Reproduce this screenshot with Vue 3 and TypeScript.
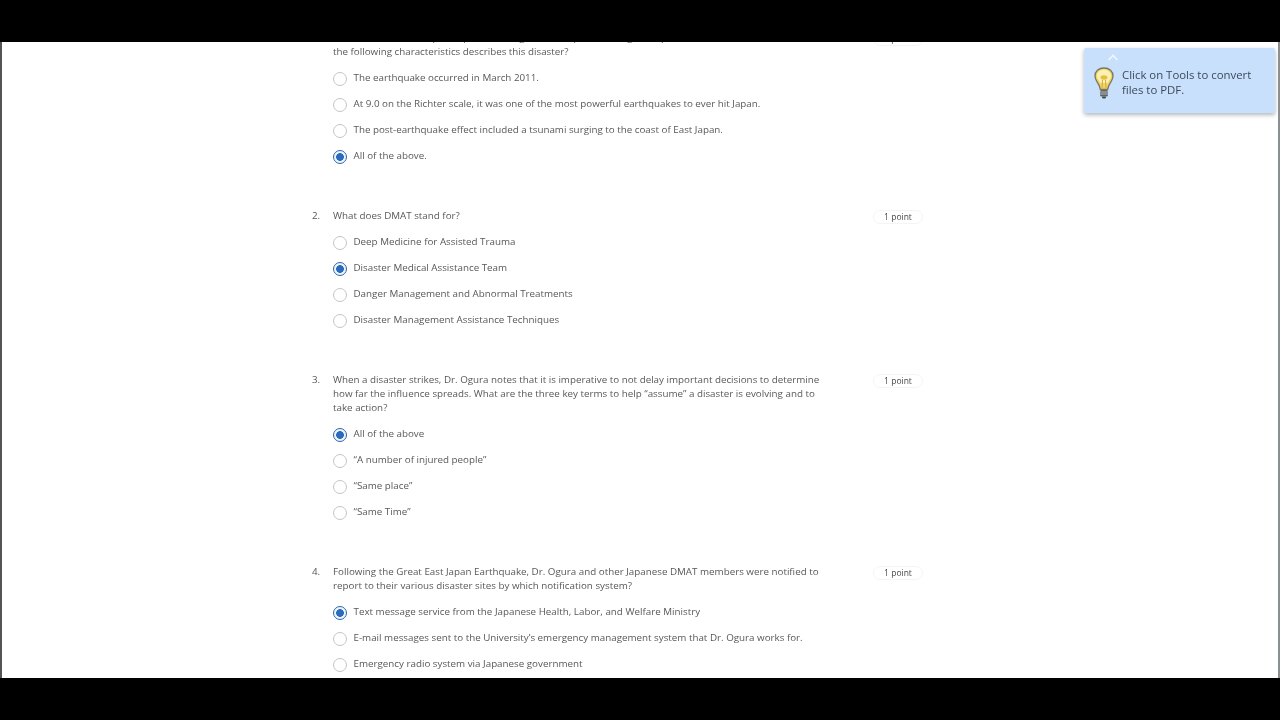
<script setup lang="ts">
interface Option { text: string; selected?: boolean }
interface Question { num: string; lines: string[]; options: Option[] }

const questions: Question[] = [
  {
    num: '1.',
    lines: [
      'On March 11, 2011, Japan experienced a great earthquake, Dr. Ogura explains. Which of',
      'the following characteristics describes this disaster?',
    ],
    options: [
      { text: 'The earthquake occurred in March 2011.' },
      { text: 'At 9.0 on the Richter scale, it was one of the most powerful earthquakes to ever hit Japan.' },
      { text: 'The post-earthquake effect included a tsunami surging to the coast of East Japan.' },
      { text: 'All of the above.', selected: true },
    ],
  },
  {
    num: '2.',
    lines: ['What does DMAT stand for?'],
    options: [
      { text: 'Deep Medicine for Assisted Trauma' },
      { text: 'Disaster Medical Assistance Team', selected: true },
      { text: 'Danger Management and Abnormal Treatments' },
      { text: 'Disaster Management Assistance Techniques' },
    ],
  },
  {
    num: '3.',
    lines: [
      'When a disaster strikes, Dr. Ogura notes that it is imperative to not delay important decisions to determine',
      'how far the influence spreads. What are the three key terms to help “assume” a disaster is evolving and to',
      'take action?',
    ],
    options: [
      { text: 'All of the above', selected: true },
      { text: '“A number of injured people”' },
      { text: '“Same place”' },
      { text: '“Same Time”' },
    ],
  },
  {
    num: '4.',
    lines: [
      'Following the Great East Japan Earthquake, Dr. Ogura and other Japanese DMAT members were notified to',
      'report to their various disaster sites by which notification system?',
    ],
    options: [
      { text: 'Text message service from the Japanese Health, Labor, and Welfare Ministry', selected: true },
      { text: 'E-mail messages sent to the University’s emergency management system that Dr. Ogura works for.' },
      { text: 'Emergency radio system via Japanese government' },
    ],
  },
]
</script>

<template>
  <div class="screen">
    <div class="page">
      <main class="quiz">
        <section v-for="q in questions" :key="q.num" class="question">
          <div class="head">
            <span class="num">{{ q.num }}</span>
            <div class="title">
              <div v-for="line in q.lines" :key="line" class="line">{{ line }}</div>
            </div>
            <span class="points">1 point</span>
          </div>
          <div class="options">
            <div v-for="o in q.options" :key="o.text" class="option">
              <span class="radio" :class="{ on: o.selected }"></span>
              <span class="label">{{ o.text }}</span>
            </div>
          </div>
        </section>
      </main>

      <aside class="tip">
        <svg class="caret" width="12" height="7" viewBox="0 0 12 7" fill="none">
          <path d="M1.5 6 L6 1.5 L10.5 6" stroke="#eef6ff" stroke-width="1.6" />
        </svg>
        <svg class="bulb" width="20" height="32" viewBox="0 0 20 32">
          <path d="M10 1 C4.5 1 1 4.500 1 9 C1 13.500 4.500 16 5.500 19.500 L6.300 22.500 L13.700 22.500 L14.500 19.500 C15.500 16 19 13.500 19 9 C19 4.500 15.500 1 10 1 Z" fill="#f2d45e" stroke="#77776a" stroke-width="1.300" />
          <path d="M10 2.500 C6 2.500 3 5.500 3 9 C3 11.500 5 13.500 6.500 16 L13.500 16 C15 13.500 17 11.500 17 9 C17 5.500 14 2.500 10 2.500 Z" fill="#fbf1b4" />
          <ellipse cx="10" cy="10.500" rx="3.500" ry="2.200" fill="#e6bf3e" />
          <path d="M8.500 13 L8 22 M11.500 13 L12 22" stroke="#d0ac45" stroke-width="1" fill="none" />
          <rect x="6" y="23" width="8" height="6.500" rx="1.500" fill="#5f6468" />
          <path d="M6 25 H14 M6 27 H14" stroke="#c9ccc9" stroke-width="0.800" />
          <rect x="8" y="29.500" width="4" height="2" rx="1" fill="#44484c" />
        </svg>
        <p class="tip-text">Click on Tools to convert<br />files to PDF.</p>
      </aside>
    </div>
  </div>
</template>

<style>
html, body { margin: 0; background: #000; }
</style>

<style scoped>
.screen {
  width: 1280px;
  height: 720px;
  background: #000;
  padding: 42px 0;
  box-sizing: border-box;
  overflow: hidden;
}
.page {
  position: relative;
  height: 636px;
  background: #fff;
  border-left: 2px solid #555;
  border-right: 2px solid #8a8f92;
  box-sizing: border-box;
  overflow: hidden;
}
.quiz {
  width: 611px;
  margin: -11px 0 0 310px;
  display: flex;
  flex-direction: column;
  gap: 39px;
  font-family: "Open Sans", sans-serif;
  font-size: 9.800px;
  color: #585858;
  filter: blur(0.45px);
}
.head {
  display: flex;
  align-items: flex-start;
}
.num {
  width: 21px;
  flex: none;
  line-height: 14px;
}
.title {
  flex: 1;
  line-height: 14px;
  white-space: nowrap;
}
.points {
  flex: none;
  width: 50px;
  height: 14px;
  margin: 1px 0 -1px;
  border: 1px solid #f4f4f4;
  border-radius: 8px;
  box-sizing: border-box;
  font-size: 8.500px;
  line-height: 12px;
  text-align: center;
  color: #484848;
}
.options {
  margin-top: 7px;
  padding-left: 21px;
}
.option {
  display: flex;
  align-items: center;
  height: 26px;
  white-space: nowrap;
}
.label {
  padding-bottom: 3px;
}
.radio {
  width: 14px;
  height: 14px;
  flex: none;
  border: 1.500px solid #c4c4c4;
  border-radius: 50%;
  box-sizing: border-box;
  background: #fff;
  margin: 0 6.500px 1px 0;
}
.radio.on {
  border: 1.500px solid #2b66a8;
  background: radial-gradient(circle, #2a6bbd 0 3.600px, #eef4fb 4.100px);
}
.tip {
  position: absolute;
  left: 1082px;
  top: 6px;
  width: 191px;
  height: 65px;
  background: #c8e0fb;
  border-radius: 2px;
  box-shadow: 0 2px 4px rgba(60, 70, 85, 0.4);
  display: flex;
  align-items: flex-start;
  box-sizing: border-box;
  padding: 19px 0 0 10px;
}
.caret {
  position: absolute;
  left: 23px;
  top: 6px;
}
.bulb {
  flex: none;
  filter: blur(0.3px);
}
.tip-text {
  margin: 1px 0 0 8px;
  font-family: "Open Sans", sans-serif;
  font-size: 11.400px;
  line-height: 14.500px;
  color: #3c4a5c;
  white-space: nowrap;
  filter: blur(0.3px);
}
</style>
